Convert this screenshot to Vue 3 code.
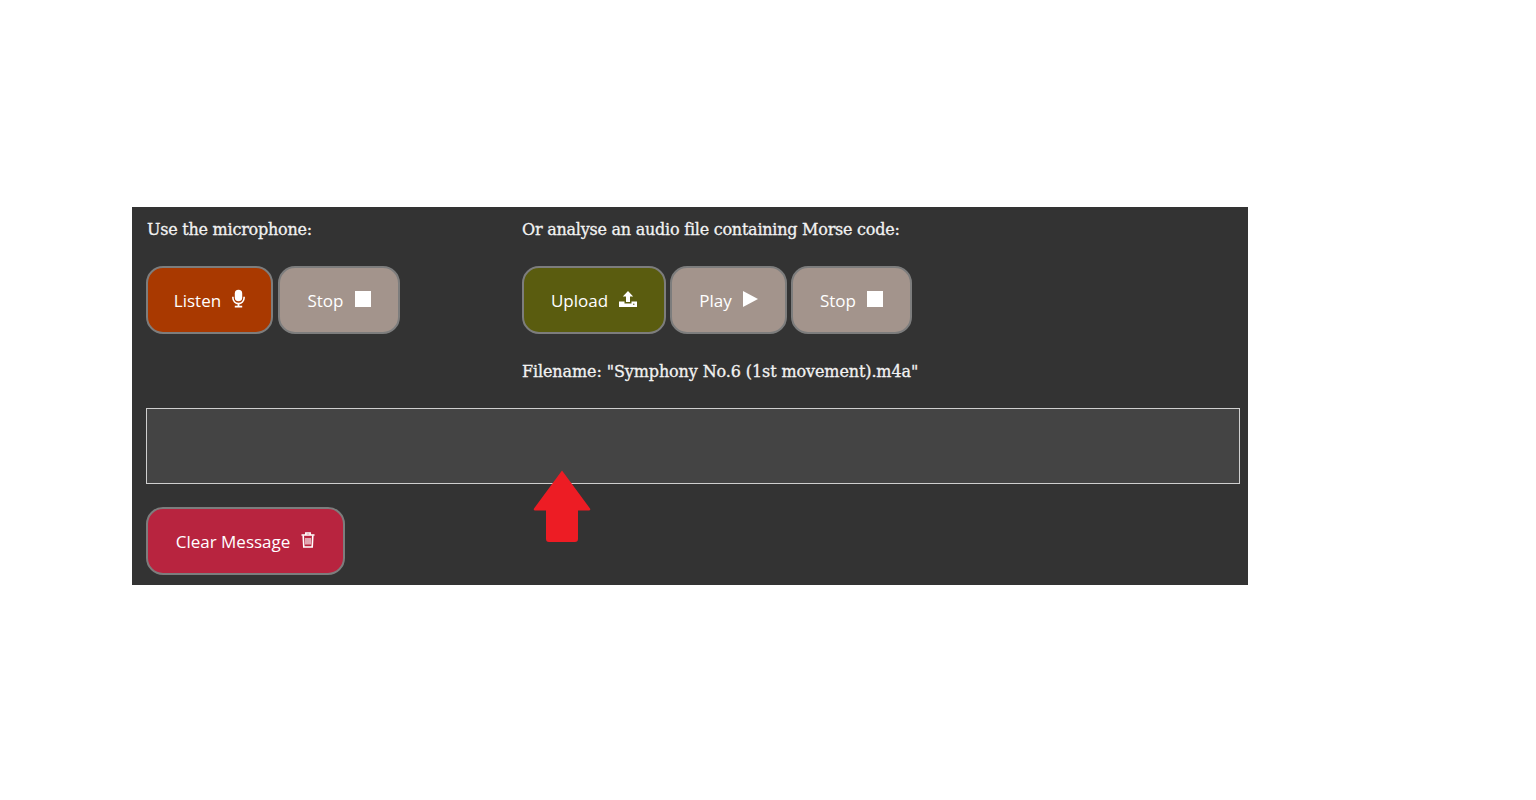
<script setup>
const micButtons = [
  { label: 'Listen', icon: 'mic', tone: 'listen', width: 127 },
  { label: 'Stop', icon: 'stop', tone: 'idle', width: 122 },
]
const fileButtons = [
  { label: 'Upload', icon: 'upload', tone: 'upload', width: 144 },
  { label: 'Play', icon: 'play', tone: 'idle', width: 117 },
  { label: 'Stop', icon: 'stop', tone: 'idle', width: 121 },
]
</script>

<template>
  <main class="page">
    <section class="panel">
      <div class="sources">
        <div class="col-mic">
          <p class="label">Use the microphone:</p>
          <div class="buttons mic-buttons">
            <button v-for="b in micButtons" :key="b.label" class="btn" :class="b.tone" :style="{ width: b.width + 'px' }">
              <span>{{ b.label }}</span>
              <svg v-if="b.icon === 'mic'" class="icon mic" viewBox="0 0 14 20"><rect x="3" y="0.5" width="8" height="12.500" rx="4" fill="#fff"/><path d="M1 8v1.500a6 6 0 0 0 12 0V8" fill="none" stroke="#fff" stroke-width="1.700"/><path d="M7 15.500V18M3 18.800h8" fill="none" stroke="#fff" stroke-width="1.900"/></svg>
              <svg v-else class="icon stop" viewBox="0 0 16 16"><rect width="16" height="16" fill="#fff"/></svg>
            </button>
          </div>
        </div>
        <div class="col-file">
          <p class="label">Or analyse an audio file containing Morse code:</p>
          <div class="buttons">
            <button v-for="b in fileButtons" :key="b.label + b.width" class="btn" :class="b.tone" :style="{ width: b.width + 'px' }">
              <span>{{ b.label }}</span>
              <svg v-if="b.icon === 'upload'" class="icon arrow-up" viewBox="0 0 18 16"><path d="M9 0l5.200 5.400H11V11H7V5.400H3.800z" fill="#fff"/><path d="M0 10.500h5.500v2h7v-2H18V16H0z" fill="#fff"/><circle cx="14.800" cy="13.300" r=".7" fill="#58590f"/></svg>
              <svg v-else-if="b.icon === 'play'" class="icon play" viewBox="0 0 15 16"><path d="M0 0l15 8-15 8z" fill="#fff"/></svg>
              <svg v-else class="icon stop" viewBox="0 0 16 16"><rect width="16" height="16" fill="#fff"/></svg>
            </button>
          </div>
          <p class="label filename">Filename: "Symphony No.6 (1st movement).m4a"</p>
        </div>
      </div>
      <div class="message"></div>
      <button class="btn clear">
        <span>Clear Message</span>
        <svg class="icon trash" viewBox="0 0 14 16"><path d="M.5 3h13M4.800 3V1h4.400v2" fill="none" stroke="#fff" stroke-width="1.500"/><path d="M2.200 3.400l.6 11.600h8.400l.6-11.600" fill="none" stroke="#fff" stroke-width="1.600"/><path d="M5 6v6.500M7 6v6.500M9 6v6.500" fill="none" stroke="#fff" stroke-width="1.200"/></svg>
      </button>
      <svg class="arrow" viewBox="0 0 58 73"><path d="M29 .5L57 38.500a1.200 1.200 0 0 1-1 2H45V69a3 3 0 0 1-3 3H16a3 3 0 0 1-3-3V40.500H2a1.200 1.200 0 0 1-1-2z" fill="#ed1c24"/></svg>
    </section>
  </main>
</template>

<style scoped>
.page {
  height: 800px;
  box-sizing: border-box;
  padding: 207px 288px 0 132px;
  background: #fff;
}
.panel {
  position: relative;
  box-sizing: border-box;
  height: 378px;
  padding: 0 8px 0 14px;
  background: #333;
  color: #f2f2f2;
  font-family: "DejaVu Serif", serif;
}
.sources {
  display: flex;
}
.col-mic {
  width: 376px;
  box-sizing: border-box;
}
.col-mic .label {
  padding-left: 1px;
}
.label {
  margin: 0;
  padding-top: 13px;
  height: 32px;
  line-height: 20px;
  font-size: 16px;
  letter-spacing: -0.24px;
  -webkit-text-stroke: 0.3px #f2f2f2;
  box-sizing: border-box;
  white-space: nowrap;
}
.buttons {
  display: flex;
  gap: 4px;
  margin-top: 27px;
}
.mic-buttons {
  gap: 5px;
}
.filename {
  margin-top: 15px;
  height: 59px;
  letter-spacing: -0.11px;
}
.btn {
  display: flex;
  align-items: center;
  justify-content: center;
  gap: 11px;
  height: 68px;
  padding: 0;
  box-sizing: border-box;
  border: 2px solid #7d7d7d;
  border-radius: 17px;
  color: #fff;
  font-family: "Open Sans", sans-serif;
  font-size: 17px;
}
.listen { background: #a93900; }
.idle { background: #a3948c; }
.upload { background: #5a5c0f; }
.clear {
  width: 199px;
  margin: 23px 0 0;
  background: #b8243f;
}
.icon { flex: none; margin-top: -3px; }
.stop { width: 16px; height: 16px; }
.mic { width: 13px; height: 19px; }
.arrow-up { width: 18px; height: 16px; }
.play { width: 15px; height: 16px; }
.trash { width: 14px; height: 16px; }
.message {
  box-sizing: border-box;
  width: 1094px;
  height: 76px;
  border: 1px solid #cfcfcf;
  background: #444;
}
.arrow {
  position: absolute;
  left: 401px;
  top: 263px;
  width: 58px;
  height: 73px;
}
</style>
